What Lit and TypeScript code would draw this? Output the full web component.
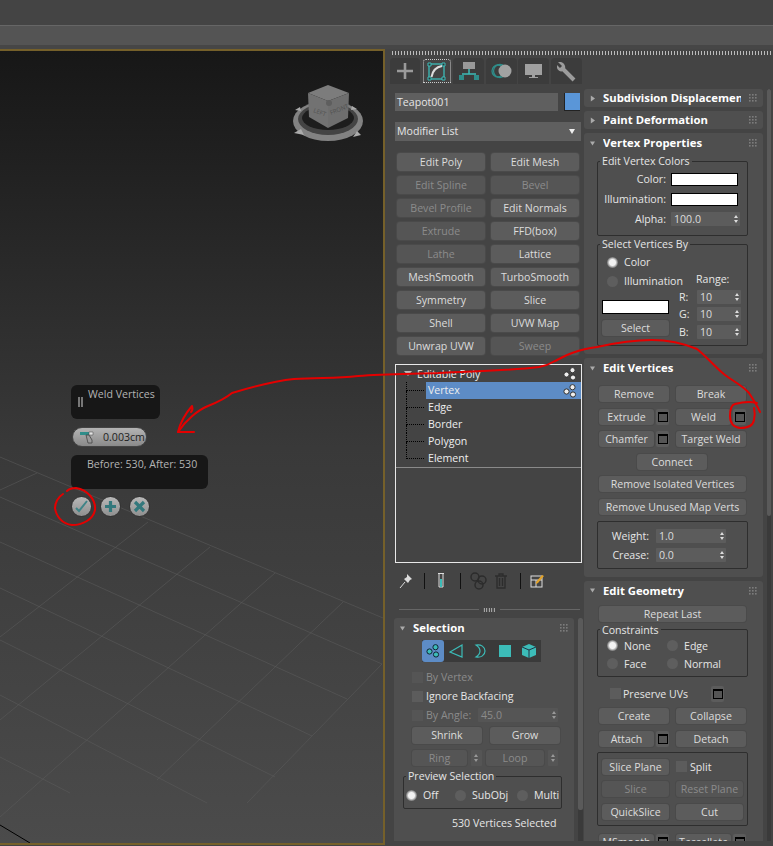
import { LitElement, html, css, svg } from "lit";
import { customElement } from "lit/decorators.js";

const TEAL = "#3cbcb8";

@customElement("app-root")
export class AppRoot extends LitElement {
  static styles = css`
    :host { display: block; width: 773px; height: 846px; position: relative; overflow: hidden; background: #444; font: 10.6px/14px "Open Sans", sans-serif; color: #e6e6e6; }
    * { box-sizing: border-box; }
    .bar1 { height: 25px; background: #444; }
    .bar2 { height: 1px; background: #666; }
    .bar3 { height: 19px; background: #545454; }
    .bar4 { height: 4px; background: #464646; }
    .main { display: flex; height: 797px; }
    .view { width: 385px; height: 796px; border: 2px solid #75602a; border-left: 0; position: relative; overflow: hidden; background: linear-gradient(#171717 0%, #393939 50%, #4b4b4b 100%); }
    .view-art { position: absolute; left: 0; top: -51px; }
    .caddy { position: absolute; left: 71px; top: 334px; display: flex; flex-direction: column; align-items: flex-start; color: #b4b4b4; }
    .tip { background: #171717; border-radius: 6px; height: 34px; position: relative; }
    .tip.one { width: 89px; padding: 2px 0 0 17px; }
    .tip.two { width: 137px; padding: 2px 0 0 16px; margin-top: 8px; }
    .handle { position: absolute; left: 7px; top: 12px; width: 5px; height: 10px; border-left: 2px solid #777; border-right: 2px solid #777; }
    .pill { width: 75px; height: 20px; margin: 8px 0 0 1px; border-radius: 10px; background: linear-gradient(#b4b4b4, #8a8a8a); border: 1px solid #444; color: #222; display: flex; align-items: center; gap: 9px; padding-left: 7px; }
    .circles { display: flex; gap: 8px; margin: 7px 0 0 0; }
    .circle { width: 21px; height: 21px; border-radius: 50%; background: linear-gradient(#b8b8b8, #8f8f8f); border: 1px solid #333; display: flex; align-items: center; justify-content: center; }

    .panel { width: 388px; flex: none; }
    .dots { height: 4px; margin: 2px 0 0 6px; background: radial-gradient(circle, #bbb 0.9px, transparent 1px) 0 0 / 3px 2px; }
    .tabs { display: grid; grid-template-columns: 30px 30px 31px 31px 31px 31px; column-gap: 1.5px; margin: 3px 0 0 5px; height: 26px; width: 190px; }
    .tab { background: #3c3c3c; border-radius: 4px 4px 0 0; display: flex; align-items: center; justify-content: center; }
    .tab.on { background: #444; outline: 1px dotted #ccc; outline-offset: -2px; }
    .cols { display: flex; height: 757px; overflow: hidden; border-bottom: 0; }
    .left { width: 199px; flex: none; padding: 9px 0 0 10px; }
    .name-row { display: flex; gap: 6px; }
    .name { width: 163px; height: 18px; background: #5f5f5f; padding-left: 2px; line-height: 18px; }
    .swatch { width: 16px; height: 18px; background: #5a96d8; border-left: 1px solid #222; border-bottom: 1px solid #222; }
    .modlist { margin-top: 11px; width: 186px; height: 19px; background: #5f5f5f; padding: 0 6px 0 2px; display: flex; align-items: center; justify-content: space-between; line-height: 19px; }
    .caret { width: 0; height: 0; border: 3.5px solid transparent; border-top: 5px solid #eee; border-bottom: 0; }
    .mods { display: grid; grid-template-columns: 88px 88px; gap: 5px 6px; margin: 12px 0 0 2px; }
    .btn { height: 16px; background: #5c5c5c; border-radius: 3px; color: #dcdcdc; text-align: center; line-height: 16px; white-space: nowrap; overflow: hidden; box-shadow: 0 0 0 1px #4a4a4a; }
    .btn.dis { color: #8b8b8b; background: #555; }
    .mods .btn { height: 18px; line-height: 19px; }
    .stack { margin-top: 9px; width: 187px; height: 199px; border: 1px solid #e8e8e8; padding-top: 0; }
    .srow { height: 17px; display: flex; line-height: 17px; color: #eee; }
    .srow.head { padding-left: 8px; line-height: 18px; gap: 5px; align-items: center; }
    .tri-d { width: 0; height: 0; border: 4px solid transparent; border-top: 5px solid #bbb; border-bottom: 0; }
    .srow .ico { margin-left: auto; margin-right: 4px; align-self: center; }
    .branch { width: 20px; margin-left: 10px; flex: none; }
    .branch .a { height: 9px; border-left: 1px dotted #000; border-bottom: 1px dotted #000; width: 18px; }
    .branch .b { height: 8px; border-left: 1px dotted #000; width: 1px; }
    .stext { flex: 1; display: flex; padding-left: 2px; }
    .stext.sel { background: #5d8cc6; }
    .sline { height: 1px; background: #8a8a8a; }
    .tools { display: grid; grid-template-columns: 22px 14px 20px 18px 20px 24px 14px 20px; margin-top: 6px; height: 24px; align-items: center; justify-items: center; }
    .vbar { width: 1px; height: 16px; background: #111; }
    .sep { display: flex; align-items: center; margin: 14px 0 0 4px; width: 181px; height: 5px; gap: 4px; }
    .sep i { flex: 1; height: 1px; background: #666; }
    .sep b { width: 13px; height: 4px; background: radial-gradient(circle, #ccc .7px, transparent .9px) 0 0 / 2.5px 2px; }
    .sel-wrap { display: flex; margin: 6px 0 0 -1px; gap: 4px; height: 300px; }
    .sbar { width: 5px; flex: none; border-radius: 2px; background: #3a3a3a; height: 300px; }
    .sbar div { background: #5a5a5a; height: 192px; border-radius: 2px; }
    .right-wrap { display: flex; gap: 4px; padding-top: 5px; }
    .right { width: 179px; display: flex; flex-direction: column; gap: 4px; flex: none; }
    .rscroll { width: 4px; flex: none; height: 800px; background: #3a3a3a; }
    .rscroll div { height: 427px; background: #5a5a5a; border-radius: 2px; }

    .roll { background: #4f4f4f; border-radius: 3px; flex: none; }
    .sel-roll { width: 180px; height: 300px; padding-bottom: 0; }
    .title { height: 20px; display: flex; align-items: center; font-size: 11.3px; font-weight: 700; color: #fff; padding-left: 6px; gap: 8px; position: relative; white-space: nowrap; overflow: hidden; }
    .title.closed { height: 18px; }
    .title span { width: 143px; overflow: hidden; }
    .grip { margin-left: auto; margin-right: 6px; flex: none; }
    .tri { flex: none; width: 5px; display: flex; }
    .body { padding: 0 17px 8px 15px; }
    fieldset { margin: 0; padding: 0; border: 1px solid #2e2e2e; border-radius: 2px; min-width: 0; }
    legend { margin-left: 2px; padding: 0 2px; line-height: 14px; color: #e6e6e6; }
    .fs2 { margin-top: 2px; }
    .lab-grid { display: grid; grid-template-columns: 68px 69px; gap: 6px 5px; padding: 4px 0 9px; justify-items: stretch; align-items: center; }
    .lab { text-align: right; white-space: nowrap; }
    .white { height: 13px; width: 67px; background: #fff; border: 1px solid #000; }
    .spin { height: 14px; background: #5c5c5c; display: flex; align-items: center; justify-content: space-between; padding: 0 2px 0 3px; color: #ddd; border-radius: 1px; }
    .spin.dis { color: #8b8b8b; background: #555; }
    .arrows { display: flex; flex-direction: column; gap: 2px; flex: none; }
    .arrows i { display: block; width: 0; height: 0; border: 2.5px solid transparent; }
    .arrows i:first-child { border-bottom: 3px solid #ddd; border-top: 0; }
    .arrows i:last-child { border-top: 3px solid #ddd; border-bottom: 0; }
    .dis .arrows i:first-child { border-bottom-color: #999; }
    .dis .arrows i:last-child { border-top-color: #999; }
    .radio { display: flex; align-items: center; gap: 6px; white-space: nowrap; height: 14px; }
    .radio i { width: 11px; height: 11px; border-radius: 50%; background: #5e5e5e; flex: none; }
    .radio i.on { background: radial-gradient(circle, #f2f2f2 0 3px, #8a8a8a 5px, #666 6px); }
    .vs { padding: 4px 0 6px 4px; }
    .vs-two { display: flex; margin-top: 5px; }
    .vs-two .radio { padding-left: 5px; width: 94px; }
    .vs-two span { margin-top: -2px; }
    .vs-one { padding-left: 5px; }
    .vs-three { display: flex; margin-top: 2px; height: 49px; }
    .vs-left { width: 67px; padding-top: 10px; flex: none; }
    .vs-left .white { height: 14px; }
    .vs-left .btn { margin-top: 6px; }
    .vs-right { margin-left: 10px; width: 62px; display: grid; grid-template-columns: 18px 44px; row-gap: 3px; align-items: center; }
    .check-ed { display: flex; flex-direction: column; gap: 6.6px; padding-top: 8px; }
    .r2 { display: grid; grid-template-columns: 70px 70px; column-gap: 7px; }
    .cbtn { display: flex; gap: 2px; }
    .cbtn .btn { flex: 1; }
    .sq { width: 13px; height: 16px; background: #5c5c5c; border-radius: 2px; flex: none; display: flex; align-items: center; justify-content: center; }
    .sq i { width: 10px; height: 10px; border: 1px solid #000; border-top-width: 2px; background: #555; }
    .mid { width: 70px; margin-left: 38px; }
    .wgroup { margin: 6px -2px 0 -2px; border: 1px solid #2e2e2e; border-radius: 2px; padding: 7px 0 6px; display: grid; grid-template-columns: 51px 70px; gap: 5px 7px; align-items: center; }
    .geo { padding-top: 5px; padding-bottom: 0; }
    .wide-fs { margin: 1px -2px 0; }
    .cons { display: grid; grid-template-columns: 60px auto; gap: 4px 0; padding: 2px 0 5px 9px; }
    .preserve { display: flex; align-items: center; gap: 2px; width: 114px; margin: 9px 0 0 11px; height: 16px; }
    .preserve .sq { margin-left: auto; }
    .box { width: 11px; height: 11px; background: #5c5c5c; flex: none; }
    .box.dis { background: #555; }
    .mt6 { margin-top: 6px; }
    .mt7 { margin-top: 7px; }
    .slice { margin: 5px -2px 0; border: 1px solid #2e2e2e; border-radius: 2px; padding: 6px 4px 5px; display: grid; grid-template-columns: 67px 67px; gap: 6.5px 7px; }
    .split { display: flex; align-items: center; gap: 3px; }
    .mt9 { margin-top: 8px; }
    .sel-body { padding: 2px 0 0 18px; width: 166px; }
    .strip { width: 119px; height: 22px; background: #3a3a3a; margin-left: 10px; display: flex; align-items: center; }
    .strip div { width: 22px; height: 22px; flex: 1; display: flex; align-items: center; justify-content: center; }
    .strip div.on { background: #5d8cc6; border-radius: 3px; flex: none; }
    .chk { display: flex; align-items: center; gap: 3px; height: 14px; margin-top: 5px; white-space: nowrap; }
    .chk.first { margin-top: 8px; }
    .chk.dim { color: #8b8b8b; }
    .chk .spin { width: 80px; margin: 0 2px 0 auto; }
    .ss { display: grid; grid-template-columns: 70px 70px; column-gap: 8px; margin-top: 5px; }
    .ss .btn { height: 17px; line-height: 17px; }
    .rl { display: grid; grid-template-columns: 55px 11px 58px 10px; column-gap: 4px; margin-top: 6px; }
    .rl .btn { height: 16px; }
    .rl .spin { height: 16px; padding: 0 3px; }
    .prev { margin: 3px 0 0 -9px; width: 159px; }
    .prev-grid { display: grid; grid-template-columns: 49px 62px auto; padding: 5px 0 6px 2px; }
    .status { margin: 7px 0 0 40px; white-space: nowrap; }
    .ink { position: absolute; left: 0; top: 0; pointer-events: none; }
  `;

  private grip() {
    const cells = [0, 3, 6];
    return html`<svg class="grip" width="8" height="8" viewBox="0 0 8 8">${cells.flatMap((x) => cells.map((y) => svg`<rect x=${x} y=${y} width="1.6" height="1.6" fill="#7c7c7c"/>`))}</svg>`;
  }
  private title(t: string, open = true) {
    return html`<div class="title ${open ? "" : "closed"}">
      <div class="tri"><svg width="6" height="7" viewBox="0 0 6 7">${open ? svg`<path d="M0 1h6L3 6z" fill="#aaa"/>` : svg`<path d="M1 0l5 3.5L1 7z" fill="#aaa"/>`}</svg></div>
      <span>${t}</span>${this.grip()}</div>`;
  }
  private btn(t: string, dis = false) { return html`<div class="btn ${dis ? "dis" : ""}">${t}</div>`; }
  private sq() { return html`<div class="sq"><i></i></div>`; }
  private cbtn(t: string) { return html`<div class="cbtn">${this.btn(t)}${this.sq()}</div>`; }
  private arrows() { return html`<div class="arrows"><i></i><i></i></div>`; }
  private spin(v: string, dis = false) { return html`<div class="spin ${dis ? "dis" : ""}"><span>${v}</span>${this.arrows()}</div>`; }
  private radio(t: string, on = false) { return html`<div class="radio"><i class=${on ? "on" : ""}></i>${t}</div>`; }
  private verts(blue = false) {
    const s = blue ? "#123" : "#333";
    const f = blue ? TEAL : "#eee";
    return html`<svg class=${blue ? "" : "ico"} width="14" height="14" viewBox="0 0 14 14" fill=${f} stroke=${s}>
      <circle cx="3.5" cy="7.5" r="2.6"/><circle cx="9.5" cy="3.2" r="2.6"/><circle cx="10" cy="10.5" r="2.6"/></svg>`;
  }
  private branch(last = false) { return html`<div class="branch"><div class="a"></div>${last ? "" : html`<div class="b"></div>`}</div>`; }

  private tabIcons() {
    return [
      svg`<path d="M4 12h16M12 4v16" stroke="#9a9a9a" stroke-width="2.600" fill="none"/>`,
      svg`<rect x="4" y="5" width="15" height="15" fill="none" stroke="${TEAL}" stroke-width="1.3"/><path d="M3 4h3v3H3zM17 4h3v3h-3zM3 18h3v3H3zM17 18h3v3h-3z" fill="#333" stroke="${TEAL}"/><path d="M6.500 18C7.500 12 11 8 17 7" fill="none" stroke="#ddd" stroke-width="2"/>`,
      svg`<rect x="6" y="3" width="12" height="7" fill="#999"/><path d="M12 10v5M5 15h14" stroke="${TEAL}" fill="none" stroke-width="1.5"/><rect x="2" y="16" width="5" height="5" fill="#2f8d8a"/><rect x="17" y="16" width="5" height="5" fill="#2f8d8a"/>`,
      svg`<circle cx="9" cy="12" r="6" fill="none" stroke="#2f8d8a" stroke-width="1.3"/><circle cx="11" cy="12" r="6.500" fill="none" stroke="#2f8d8a" stroke-width="1.3"/><circle cx="16" cy="12" r="6.500" fill="#a2a2a2"/>`,
      svg`<rect x="3" y="5" width="17" height="11" fill="#a0a0a0"/><path d="M10 16h3v2h3v1H7v-1h3z" fill="#a0a0a0"/>`,
      svg`<path d="M9 10l11 11" stroke="#9c9c9c" stroke-width="4" fill="none"/><path d="M7 3L4 3 8 7 6 9 3 6v3c1 3 4 4 6 3l2-2c1-3-1-6-4-7z" fill="#9c9c9c"/>`,
    ];
  }

  private left() {
    const mods: [string, boolean][] = [
      ["Edit Poly", false], ["Edit Mesh", false], ["Edit Spline", true], ["Bevel", true],
      ["Bevel Profile", true], ["Edit Normals", false], ["Extrude", true], ["FFD(box)", false],
      ["Lathe", true], ["Lattice", false], ["MeshSmooth", false], ["TurboSmooth", false],
      ["Symmetry", false], ["Slice", false], ["Shell", false], ["UVW Map", false],
      ["Unwrap UVW", false], ["Sweep", true],
    ];
    return html`<div class="left">
      <div class="name-row"><div class="name">Teapot001</div><div class="swatch"></div></div>
      <div class="modlist"><span>Modifier List</span><div class="caret"></div></div>
      <div class="mods">${mods.map(([t, d]) => this.btn(t, d))}</div>
      <div class="stack">
        <div class="srow head"><div class="tri-d"></div><span>Editable Poly</span>${this.verts()}</div>
        <div class="srow">${this.branch()}<div class="stext sel">Vertex ${this.verts()}</div></div>
        <div class="srow">${this.branch()}<div class="stext">Edge</div></div>
        <div class="srow">${this.branch()}<div class="stext">Border</div></div>
        <div class="srow">${this.branch()}<div class="stext">Polygon</div></div>
        <div class="srow">${this.branch(true)}<div class="stext">Element</div></div>
        <div class="sline"></div>
      </div>
      <div class="tools">
        <svg width="14" height="16" viewBox="0 0 14 16"><path d="M1 15l5-6" stroke="#ddd" fill="none"/><path d="M8 1l5 5-2 1-2 3-4-4 3-2z" fill="#ddd"/></svg>
        <div class="vbar"></div>
        <svg width="8" height="16" viewBox="0 0 8 16"><path d="M1 .5h6M2 1v13h4V1" stroke="#ddd" fill="none"/><rect x="3" y="6" width="2" height="8" fill="${TEAL}"/></svg>
        <div class="vbar"></div>
        <svg width="18" height="18" viewBox="0 0 18 18" fill="none" stroke="#2c2c2c" stroke-width="1.5"><circle cx="5" cy="5" r="4"/><circle cx="12" cy="8" r="4"/><circle cx="9" cy="13" r="4"/></svg>
        <svg width="12" height="16" viewBox="0 0 12 16" fill="none" stroke="#2c2c2c" stroke-width="1.3"><path d="M0 3h12M4 3V1h4v2M2 3v12h8V3M4.500 5v8M7.500 5v8"/></svg>
        <div class="vbar"></div>
        <svg width="14" height="14" viewBox="0 0 14 14"><rect x="1" y="2" width="11" height="11" fill="none" stroke="#ddd"/><path d="M1 6h11M6 6v7" stroke="#ddd"/><path d="M6 8l6-7 2 1-6 7-2 1z" fill="#e3a32a"/></svg>
      </div>
      <div class="sep"><i></i><b></b><i></i></div>
      <div class="sel-wrap">
        <div class="roll sel-roll">
          ${this.title("Selection")}
          <div class="sel-body">
            <div class="strip">
              <div class="on">${this.verts(true)}</div>
              <div><svg width="14" height="14" viewBox="0 0 14 14" fill="none" stroke="${TEAL}" stroke-width="1.2"><path d="M1 8L13 1v12z"/></svg></div>
              <div><svg width="12" height="14" viewBox="0 0 12 14" fill="none" stroke="${TEAL}" stroke-width="1.2"><path d="M2 1c5-1 9 2 9 6s-4 7-9 6c3-2 4-3 4-6S5 3 2 1z"/></svg></div>
              <div><svg width="14" height="14" viewBox="0 0 14 14"><rect x="1" y="1" width="12" height="12" fill="${TEAL}"/></svg></div>
              <div><svg width="16" height="16" viewBox="0 0 16 16"><path d="M8 1l7 3v8l-7 3-7-3V4z" fill="${TEAL}"/><path d="M1 4l7 3 7-3M8 7v8" stroke="#234" fill="none"/></svg></div>
            </div>
            <div class="chk first dim"><div class="box dis"></div>By Vertex</div>
            <div class="chk"><div class="box"></div>Ignore Backfacing</div>
            <div class="chk dim"><div class="box dis"></div>By Angle:${this.spin("45.0", true)}</div>
            <div class="ss">${this.btn("Shrink")}${this.btn("Grow")}</div>
            <div class="rl">${this.btn("Ring", true)}<div class="spin dis">${this.arrows()}</div>${this.btn("Loop", true)}<div class="spin dis">${this.arrows()}</div></div>
            <fieldset class="prev"><legend>Preview Selection</legend>
              <div class="prev-grid">${this.radio("Off", true)}${this.radio("SubObj")}${this.radio("Multi")}</div>
            </fieldset>
            <div class="status">530 Vertices Selected</div>
          </div>
        </div>
        <div class="sbar"><div></div></div>
      </div>
    </div>`;
  }

  private right() {
    return html`<div class="right-wrap"><div class="right">
      <div class="roll">${this.title("Subdivision Displacement", false)}</div>
      <div class="roll">${this.title("Paint Deformation", false)}</div>
      <div class="roll">
        ${this.title("Vertex Properties")}
        <div class="body">
          <fieldset class="wide-fs"><legend>Edit Vertex Colors</legend>
            <div class="lab-grid">
              <div class="lab">Color:</div><div class="white"></div>
              <div class="lab">Illumination:</div><div class="white"></div>
              <div class="lab">Alpha:</div>${this.spin("100.0")}
            </div>
          </fieldset>
          <fieldset class="wide-fs fs2"><legend>Select Vertices By</legend>
            <div class="vs">
              <div class="vs-one">${this.radio("Color", true)}</div>
              <div class="vs-two">${this.radio("Illumination")}<span>Range:</span></div>
              <div class="vs-three">
                <div class="vs-left"><div class="white"></div>${this.btn("Select")}</div>
                <div class="vs-right">
                  <span>R:</span>${this.spin("10")}
                  <span>G:</span>${this.spin("10")}
                  <span>B:</span>${this.spin("10")}
                </div>
              </div>
            </div>
          </fieldset>
        </div>
      </div>
      <div class="roll">
        ${this.title("Edit Vertices")}
        <div class="body">
          <div class="check-ed">
            <div class="r2">${this.btn("Remove")}${this.btn("Break")}</div>
            <div class="r2">${this.cbtn("Extrude")}${this.cbtn("Weld")}</div>
            <div class="r2">${this.cbtn("Chamfer")}${this.btn("Target Weld")}</div>
            <div class="mid">${this.btn("Connect")}</div>
            ${this.btn("Remove Isolated Vertices")}
            ${this.btn("Remove Unused Map Verts")}
          </div>
          <div class="wgroup">
            <div class="lab">Weight:</div>${this.spin("1.0")}
            <div class="lab">Crease:</div>${this.spin("0.0")}
          </div>
        </div>
      </div>
      <div class="roll">
        ${this.title("Edit Geometry")}
        <div class="body geo">
          ${this.btn("Repeat Last")}
          <fieldset class="wide-fs"><legend>Constraints</legend>
            <div class="cons">${this.radio("None", true)}${this.radio("Edge")}${this.radio("Face")}${this.radio("Normal")}</div>
          </fieldset>
          <div class="preserve"><div class="box"></div>Preserve UVs${this.sq()}</div>
          <div class="r2 mt6">${this.btn("Create")}${this.btn("Collapse")}</div>
          <div class="r2 mt7">${this.cbtn("Attach")}${this.btn("Detach")}</div>
          <div class="slice">
            ${this.btn("Slice Plane")}<div class="split"><div class="box"></div>Split</div>
            ${this.btn("Slice", true)}${this.btn("Reset Plane", true)}
            ${this.btn("QuickSlice")}${this.btn("Cut")}
          </div>
          <div class="r2 mt9">${this.cbtn("MSmooth")}${this.cbtn("Tessellate")}</div>
        </div>
      </div>
    </div><div class="rscroll"><div></div></div></div>`;
  }

  private viewArt() {
    const lines = [
      [0,457,383,618],[0,497,382,664],[0,542,347,699],[0,588,312,736],[0,640,275,777],[0,695,207,803],[0,757,70,793],
      [0,490,37,473],[0,637,148,522],[0,720,210,547],[0,817,275,573],[157,780,343,602],[247,803,382,664],
    ];
    return html`<svg class="view-art" width="385" height="846" viewBox="0 0 385 846">
      ${lines.map(([a, b, c, d]) => svg`<line x1=${a} y1=${b} x2=${c} y2=${d} stroke="#5c5c5c" stroke-opacity=".7" stroke-width=".8"/>`)}
      <line x1="0" y1="825" x2="30" y2="843" stroke="#000"/>
      <ellipse cx="328" cy="121" rx="35" ry="20" fill="#828282"/>
      <ellipse cx="328" cy="119" rx="30" ry="16" fill="#444"/>
      <ellipse cx="328" cy="118" rx="26" ry="12" fill="#1d1d1d"/>
      <path d="M300 107l-5 3 6 1zM352 106l5 3-6 1zM294 133l7-4 3 6zM357 131l4 4-8 2z" fill="#aaa"/>
      <path d="M328 85l21 8-21 8-20-8z" fill="#7c7c7c"/>
      <path d="M308 93l20 8v27l-19-11z" fill="#727272"/>
      <path d="M349 93l-21 8v27l20-10z" fill="#6e6e6e"/>
      <circle cx="329" cy="103" r="3" fill="#5e5e5e"/>
      <text x="313" y="112" font-size="6" fill="#505050" transform="rotate(20 313 112)">LEFT</text>
      <text x="331" y="115" font-size="6" fill="#505050" transform="rotate(-22 331 115)">FRONT</text>
    </svg>
    <div class="caddy">
      <div class="tip one"><div class="handle"></div>Weld Vertices</div>
      <div class="pill">
        <svg width="14" height="14" viewBox="0 0 14 14"><path d="M0 2h9v3H0z" fill="#2f8d8a"/><path d="M9 2h4v3H9z" fill="#e4e4e4" stroke="#444" stroke-width=".5"/><path d="M6 5h3l3 5v3H8z" fill="#999" stroke="#444" stroke-width=".8"/></svg>
        0.003cm
      </div>
      <div class="tip two">Before: 530, After: 530</div>
      <div class="circles">
        <div class="circle"><svg width="13" height="13" viewBox="0 0 13 13"><path d="M1 8l3 3 8-10" fill="none" stroke="#3f8487" stroke-width="2"/></svg></div>
        <div class="circle"><svg width="13" height="13" viewBox="0 0 13 13"><path d="M6.500 1v11M1 6.500h11" fill="none" stroke="#33787c" stroke-width="3.200"/></svg></div>
        <div class="circle"><svg width="13" height="13" viewBox="0 0 13 13"><path d="M2 2l9 9M11 2l-9 9" fill="none" stroke="#33787c" stroke-width="3.200"/></svg></div>
      </div>
    </div>`;
  }

  render() {
    const icons = this.tabIcons();
    return html`
      <div class="bar1"></div><div class="bar2"></div><div class="bar3"></div><div class="bar4"></div>
      <div class="main">
        <div class="view">${this.viewArt()}</div>
        <div class="panel">
          <div class="dots"></div>
          <div class="tabs">
            ${icons.map((ic, i) => html`<div class="tab ${i === 1 ? "on" : ""}"><svg width="24" height="24" viewBox="0 0 24 24">${ic}</svg></div>`)}
          </div>
          <div class="cols">${this.left()}${this.right()}</div>
        </div>
      </div>
      <svg class="ink" width="773" height="846" viewBox="0 0 773 846" fill="none" stroke="#e40000" stroke-width="2" stroke-linecap="round" stroke-linejoin="round">
        <path d="M178 432h16M178 432c2-8 7-18 14-26M192 406c1 3 0 5-1 6"/>
        <path d="M178 432C186 420 198 410 208 406S226 398 232 393C252 387 274 381 294 379C318 377 334 379 358 376C384 374 408 374 438 373C471 371 506 371 539 367C545 366 550 364 555 361C565 356 575 350 597 347C615 343 632 340 652 340C670 340 685 344 697 349C707 357 715 367 725 375C733 381 743 386 749 393C753 399 757 405 760 412"/>
        <path d="M757 403C750 401 742 402 735 404C731 405 730 411 730 416C730 423 733 427 740 428C748 428 753 426 754 420C755 416 755 412 754 408"/>
        <path d="M63 494C58 497 55 503 55 508C56 516 62 524 72 525C82 525 93 520 95 510C96 500 88 490 76 488C72 488 69 489 67 491"/>
      </svg>
    `;
  }
}
